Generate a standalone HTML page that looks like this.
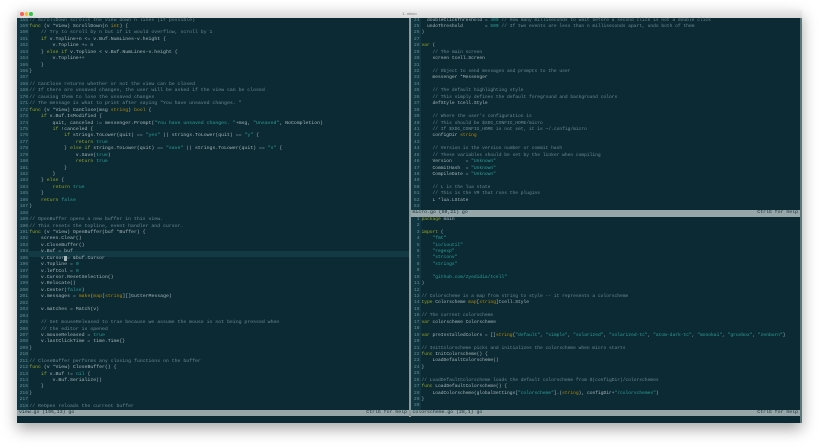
<!DOCTYPE html>
<html><head><meta charset="utf-8"><style>
*{margin:0;padding:0;box-sizing:border-box}
body{width:819px;height:448px;background:#fff;position:relative;overflow:hidden;font-family:"Liberation Mono",monospace}
.win{position:absolute;left:17px;top:10px;width:785px;height:413px;background:#0c2a34;box-shadow:0 6px 14px rgba(0,0,0,.35);overflow:hidden}
.tb{position:absolute;left:0;top:0;width:785px;height:7.5px;background:linear-gradient(#ececec,#d9d9d9);font-family:"Liberation Sans",sans-serif;font-size:4px;color:#777;text-align:center;line-height:7.5px}
.dot{position:absolute;top:2px;width:3.6px;height:3.6px;border-radius:50%}
pre{position:absolute;font-family:"Liberation Mono",monospace;font-size:4.85px;line-height:6.43px;color:#a7b6b8;white-space:pre}
pre.r{font-size:4.6px}
.g{background:#0f3641;color:#6f8b91;text-align:right;font-size:4.67px}
.c{color:#6b8890}.k{color:#9aa820}.t{color:#b58900}.s{color:#2aa198}.n{color:#2aa198}
.sb{position:absolute;height:6.43px;background:#97a6a8;color:#0d2a33;font-size:4.85px;line-height:6.43px;white-space:pre;padding:0 2px}
.sb span{float:right}
.hl{position:absolute;background:#123a45}
</style></head><body>
<div class="win">
<div class="tb">1. micro<div class="dot" style="left:3px;background:#fc5f57"></div><div class="dot" style="left:7.5px;background:#fdbc2e"></div><div class="dot" style="left:12px;background:#33c748"></div></div>
<div class="hl" style="left:0;top:241px;width:392px;height:6.43px"></div>
<pre class="g" style="left:0;top:7.5px;width:12px;padding-right:1px">158
159
160
161
162
163
164
165
166
167
168
169
170
171
172
173
174
175
176
177
178
179
180
181
182
183
184
185
186
187
188
189
190
191
192
193
194
195
196
197
198
199
200
201
202
203
204
205
206
207
208
209
210
211
212
213
214
215
216
217
218</pre>
<pre style="left:12.3px;top:7.5px"><span class="c">// ScrollDown scrolls the view down n lines (if possible)</span>
<span class="k">func</span> (v *View) ScrollDown(n <span class="t">int</span>) {
    <span class="c">// Try to scroll by n but if it would overflow, scroll by 1</span>
    <span class="k">if</span> v.Topline+n &lt;= v.Buf.NumLines-v.height {
        v.Topline += n
    } <span class="k">else if</span> v.Topline &lt; v.Buf.NumLines-v.height {
        v.Topline++
    }
}

<span class="c">// CanClose returns whether or not the view can be closed</span>
<span class="c">// If there are unsaved changes, the user will be asked if the view can be closed</span>
<span class="c">// causing them to lose the unsaved changes</span>
<span class="c">// The message is what to print after saying "You have unsaved changes. "</span>
<span class="k">func</span> (v *View) CanClose(msg <span class="t">string</span>) <span class="t">bool</span> {
    <span class="k">if</span> v.Buf.IsModified {
        quit, canceled := messenger.Prompt(<span class="s">"You have unsaved changes. "</span>+msg, <span class="s">"Unsaved"</span>, NoCompletion)
        <span class="k">if</span> !canceled {
            <span class="k">if</span> strings.ToLower(quit) == <span class="s">"yes"</span> || strings.ToLower(quit) == <span class="s">"y"</span> {
                <span class="k">return</span> <span class="n">true</span>
            } <span class="k">else if</span> strings.ToLower(quit) == <span class="s">"save"</span> || strings.ToLower(quit) == <span class="s">"s"</span> {
                v.Save(<span class="n">true</span>)
                <span class="k">return</span> <span class="n">true</span>
            }
        }
    } <span class="k">else</span> {
        <span class="k">return</span> <span class="n">true</span>
    }
    <span class="k">return</span> <span class="n">false</span>
}

<span class="c">// OpenBuffer opens a new buffer in this view.</span>
<span class="c">// This resets the topline, event handler and cursor.</span>
<span class="k">func</span> (v *View) OpenBuffer(buf *Buffer) {
    screen.Clear()
    v.CloseBuffer()
    v.Buf = buf
    v.Cursor<span style="background:#a7b6b8;color:#0c2a34"> </span>= &amp;buf.Cursor
    v.Topline = <span class="n">0</span>
    v.leftCol = <span class="n">0</span>
    v.Cursor.ResetSelection()
    v.Relocate()
    v.Center(<span class="n">false</span>)
    v.messages = <span class="t">make</span>(<span class="t">map</span>[<span class="t">string</span>][]GutterMessage)

    v.matches = Match(v)

    <span class="c">// Set mouseReleased to true because we assume the mouse is not being pressed when</span>
    <span class="c">// the editor is opened</span>
    v.mouseReleased = <span class="n">true</span>
    v.lastClickTime = time.Time{}
}

<span class="c">// CloseBuffer performs any closing functions on the buffer</span>
<span class="k">func</span> (v *View) CloseBuffer() {
    <span class="k">if</span> v.Buf != <span class="n">nil</span> {
        v.Buf.Serialize()
    }
}

<span class="c">// ReOpen reloads the current buffer</span></pre>
<div style="position:absolute;left:392px;top:7.5px;width:393px;height:406px;background:#0c2a34"></div>
<div style="position:absolute;left:392px;top:7.5px;width:1.5px;height:399px;background:#8a9a9c"></div>
<pre class="g" style="left:393.5px;top:7.5px;width:10px;padding-right:1px">24
25
26
27
28
29
30
31
32
33
34
35
36
37
38
39
40
41
42
43
44
45
46
47
48
49
50
51
52
53</pre>
<pre class="r" style="left:404.5px;top:7.5px">  doubleClickThreshold = <span class="n">400</span> <span class="c">// How many milliseconds to wait before a second click is not a double click</span>
  undoThreshold        = <span class="n">500</span> <span class="c">// If two events are less than n milliseconds apart, undo both of them</span>
)

<span class="k">var</span> (
    <span class="c">// The main screen</span>
    screen tcell.Screen

    <span class="c">// Object to send messages and prompts to the user</span>
    messenger *Messenger

    <span class="c">// The default highlighting style</span>
    <span class="c">// This simply defines the default foreground and background colors</span>
    defStyle tcell.Style

    <span class="c">// Where the user's configuration is</span>
    <span class="c">// This should be $XDG_CONFIG_HOME/micro</span>
    <span class="c">// If $XDG_CONFIG_HOME is not set, it is ~/.config/micro</span>
    configDir <span class="t">string</span>

    <span class="c">// Version is the version number or commit hash</span>
    <span class="c">// These variables should be set by the linker when compiling</span>
    Version     = <span class="s">"Unknown"</span>
    CommitHash  = <span class="s">"Unknown"</span>
    CompileDate = <span class="s">"Unknown"</span>

    <span class="c">// L is the lua state</span>
    <span class="c">// This is the VM that runs the plugins</span>
    L *lua.LState
</pre>
<div class="sb" style="left:393.5px;top:200.4px;width:389.5px">micro.go (50,21) go<span>CtrlG for help</span></div>
<pre class="g" style="left:393.5px;top:206.8px;width:10px;padding-right:1px"> 1
 2
 3
 4
 5
 6
 7
 8
 9
10
11
12
13
14
15
16
17
18
19
20
21
22
23
24
25
26
27
28
29
30</pre>
<pre class="r" style="left:404.5px;top:206.8px"><span class="k">package</span> main

<span class="k">import</span> (
    <span class="s">"fmt"</span>
    <span class="s">"io/ioutil"</span>
    <span class="s">"regexp"</span>
    <span class="s">"strconv"</span>
    <span class="s">"strings"</span>

    <span class="s">"github.com/zyedidia/tcell"</span>
)

<span class="c">// Colorscheme is a map from string to style -- it represents a colorscheme</span>
<span class="k">type</span> Colorscheme <span class="t">map</span>[<span class="t">string</span>]tcell.Style

<span class="c">// The current colorscheme</span>
<span class="k">var</span> colorscheme Colorscheme

<span class="k">var</span> preInstalledColors = []<span class="t">string</span>{<span class="s">"default"</span>, <span class="s">"simple"</span>, <span class="s">"solarized"</span>, <span class="s">"solarized-tc"</span>, <span class="s">"atom-dark-tc"</span>, <span class="s">"monokai"</span>, <span class="s">"gruvbox"</span>, <span class="s">"zenburn"</span>}

<span class="c">// InitColorscheme picks and initializes the colorscheme when micro starts</span>
<span class="k">func</span> InitColorscheme() {
    LoadDefaultColorscheme()
}

<span class="c">// LoadDefaultColorscheme loads the default colorscheme from $(configDir)/colorschemes</span>
<span class="k">func</span> LoadDefaultColorscheme() {
    LoadColorscheme(globalSettings[<span class="s">"colorscheme"</span>].(<span class="t">string</span>), configDir+<span class="s">"/colorschemes"</span>)
}
</pre>
<div style="position:absolute;left:783px;top:7.5px;width:2px;height:406px;background:#5f7477"></div>
<div class="sb" style="left:0;top:399.7px;width:392px">view.go (195,13) go<span>CtrlG for help</span></div>
<div class="sb" style="left:393.5px;top:399.7px;width:389.5px">colorscheme.go (28,1) go<span>CtrlG for help</span></div>
</div>
</body></html>
